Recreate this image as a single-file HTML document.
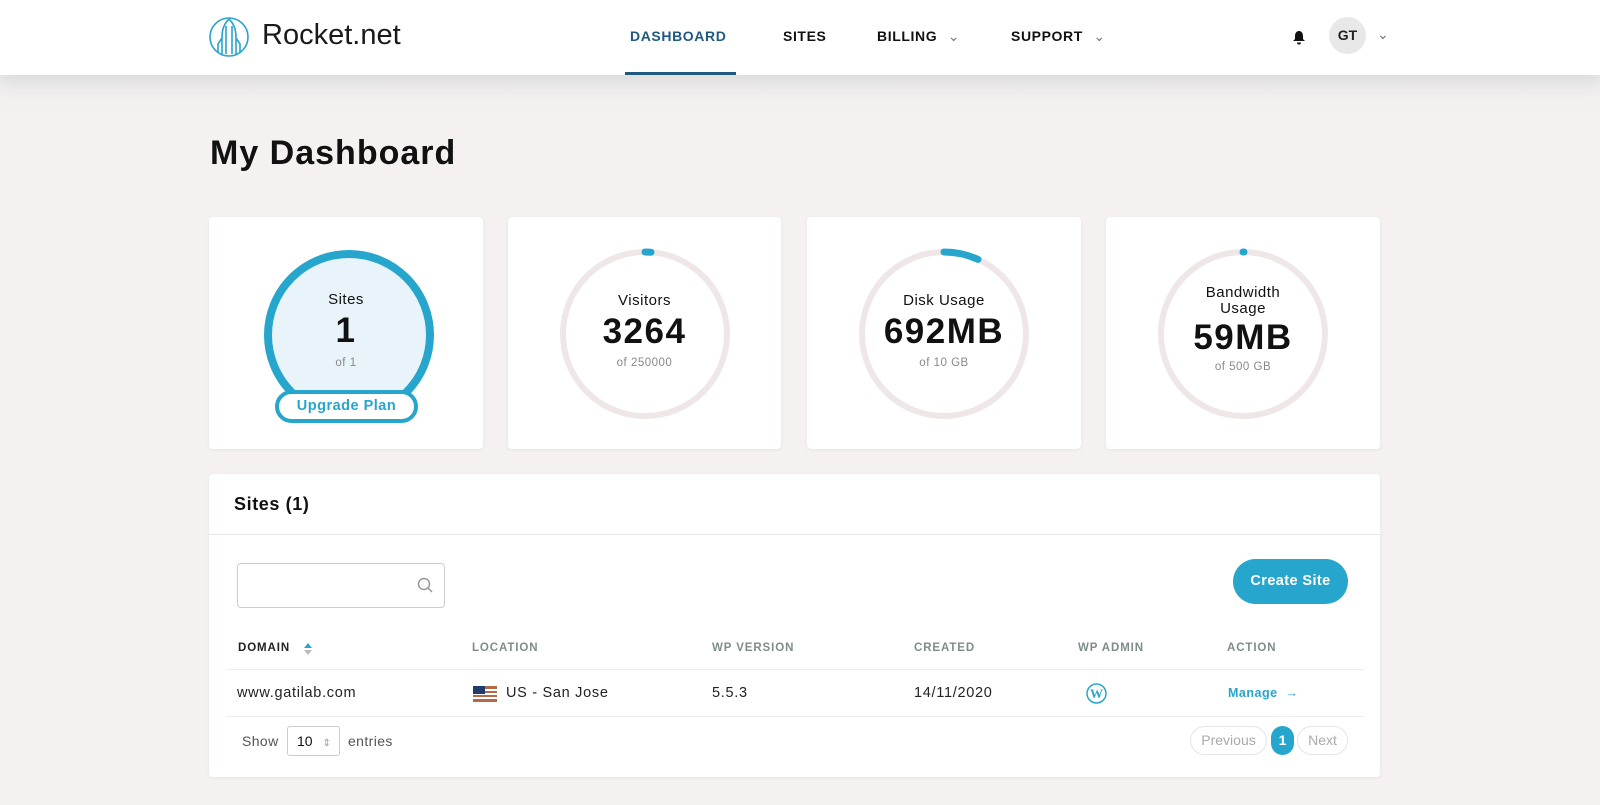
<!DOCTYPE html>
<html><head><meta charset="utf-8"><style>
*{box-sizing:border-box;margin:0;padding:0}
body{width:1600px;height:805px;overflow:hidden;background:#f6f1f1;font-family:"Liberation Sans",sans-serif;color:#111;position:relative}
.hdr{position:absolute;left:0;top:0;width:1600px;height:75px;background:#fff;box-shadow:0 6px 18px rgba(0,0,0,.08)}
.band{position:absolute;left:0;top:75px;width:1600px;height:40px;background:linear-gradient(#ececec,#f6f1f1)}
.nav{position:absolute;top:28px;font-weight:bold;font-size:14px;letter-spacing:.6px;color:#111}
.card{position:absolute;background:#fff;border-radius:4px;box-shadow:0 1px 4px rgba(0,0,0,.06)}
.lbl{position:absolute;width:100%;text-align:center;left:0;letter-spacing:.5px}
.big{font-size:35px;font-weight:bold;letter-spacing:1.5px}
.th{position:absolute;top:642px;font-size:11.5px;font-weight:bold;color:#7f8c8d;letter-spacing:.9px}
.td{position:absolute;top:685px;font-size:14.5px;color:#222;letter-spacing:.7px}
</style></head><body>
<div class="band"></div>
<div class="hdr">
<svg style="position:absolute;left:208px;top:16px" width="42" height="42" viewBox="0 0 42 42" fill="none" stroke="#2aa3cc" stroke-width="1.6"><circle cx="21" cy="21" r="19"/><path d="M21 3 C15 9 14 15 14 22 L10 28 L10 37 M21 3 C27 9 28 15 28 22 L32 28 L32 37 M18 10 V38 M24 10 V38 M14 22 V38 M28 22 V38"/></svg>
<div style="position:absolute;left:262px;top:19px;font-size:29px;color:#1a1a1a">Rocket<span style="font-weight:300">.net</span></div>
<div class="nav" style="left:630px;color:#1e5a7f">DASHBOARD</div>
<div style="position:absolute;left:625px;top:72px;width:111px;height:3px;background:#1e5a7f"></div>
<div class="nav" style="left:783px">SITES</div>
<div class="nav" style="left:877px">BILLING <span style="font-weight:normal;color:#777;margin-left:6px">&#8964;</span></div>
<div class="nav" style="left:1011px">SUPPORT <span style="font-weight:normal;color:#777;margin-left:6px">&#8964;</span></div>
<svg style="position:absolute;left:1292px;top:30px" width="14" height="15" viewBox="0 0 14 15"><path d="M7 1C4 1 3 4 3 6V9L1 11H13L11 9V6C11 4 10 1 7 1Z M5 12.5A2 2 0 0 0 9 12.5Z" fill="#111"/></svg>
<div style="position:absolute;left:1329px;top:17px;width:37px;height:37px;border-radius:50%;background:#e8e8e8;text-align:center;line-height:37px;font-weight:bold;font-size:14px;color:#222">GT</div>
<div style="position:absolute;left:1377px;top:26px;color:#777;font-size:14px">&#8964;</div>
</div>
<div style="position:absolute;left:210px;top:134px;font-size:34px;font-weight:bold;color:#111;letter-spacing:1px">My Dashboard</div>

<div class="card" style="left:209px;top:217px;width:274px;height:232px">
<svg style="position:absolute;left:52px;top:30px" width="176" height="176"><circle cx="88" cy="88" r="81" fill="#e8f4fa" stroke="#27a6cd" stroke-width="8"/></svg>
<div class="lbl" style="top:74px;font-size:15px">Sites</div>
<div class="lbl big" style="top:94px">1</div>
<div class="lbl" style="top:140px;font-size:11.5px;color:#888">of 1</div>
<div style="position:absolute;left:66px;top:173px;width:143px;height:33px;border:4px solid #27a6cd;border-radius:17px;background:#fff;text-align:center;line-height:25px;font-weight:bold;font-size:14.5px;color:#27a6cd;letter-spacing:.5px">Upgrade Plan</div>
</div>

<div class="card" style="left:508px;top:217px;width:273px;height:232px">
<svg style="position:absolute;left:49px;top:29px" width="176" height="176"><circle cx="88" cy="88" r="82" fill="none" stroke="#efe7e7" stroke-width="6"/><path d="M88 6 A82 82 0 0 1 94 6.2" fill="none" stroke="#27a6cd" stroke-width="7" stroke-linecap="round"/></svg>
<div class="lbl" style="top:75px;font-size:15px">Visitors</div>
<div class="lbl big" style="top:95px">3264</div>
<div class="lbl" style="top:140px;font-size:11.5px;color:#888">of 250000</div>
</div>

<div class="card" style="left:807px;top:217px;width:274px;height:232px">
<svg style="position:absolute;left:49px;top:29px" width="176" height="176"><circle cx="88" cy="88" r="82" fill="none" stroke="#efe7e7" stroke-width="6"/><path d="M88 6 A82 82 0 0 1 122 13.4" fill="none" stroke="#27a6cd" stroke-width="7" stroke-linecap="round"/></svg>
<div class="lbl" style="top:75px;font-size:15px">Disk Usage</div>
<div class="lbl big" style="top:95px">692MB</div>
<div class="lbl" style="top:140px;font-size:11.5px;color:#888">of 10 GB</div>
</div>

<div class="card" style="left:1106px;top:217px;width:274px;height:232px">
<svg style="position:absolute;left:49px;top:29px" width="176" height="176"><circle cx="88" cy="88" r="82" fill="none" stroke="#efe7e7" stroke-width="6"/><path d="M88 6 A82 82 0 0 1 89 6" fill="none" stroke="#27a6cd" stroke-width="7" stroke-linecap="round"/></svg>
<div class="lbl" style="top:68px;font-size:15px;line-height:16px">Bandwidth<br>Usage</div>
<div class="lbl big" style="top:101px">59MB</div>
<div class="lbl" style="top:144px;font-size:11.5px;color:#888">of 500 GB</div>
</div>

<div class="card" style="left:209px;top:474px;width:1171px;height:303px"></div>
<div style="position:absolute;left:234px;top:494px;font-size:18px;font-weight:bold;letter-spacing:.6px">Sites (1)</div>
<div style="position:absolute;left:209px;top:534px;width:1171px;height:1px;background:#e8e8e8"></div>
<div style="position:absolute;left:237px;top:563px;width:208px;height:45px;border:1px solid #ccc;border-radius:4px"></div>
<svg style="position:absolute;left:417px;top:577px" width="16" height="16" fill="none" stroke="#999" stroke-width="1.5"><circle cx="7" cy="7" r="5.5"/><path d="M11 11L15 15"/></svg>
<div style="position:absolute;left:1233px;top:559px;width:115px;height:45px;border-radius:23px;background:#27a6cd;color:#fff;text-align:center;padding-top:14px;font-size:14.5px;font-weight:bold;letter-spacing:.4px">Create Site</div>

<div class="th" style="left:238px;color:#222">DOMAIN</div>
<div style="position:absolute;left:304px;top:643px;width:0;height:0;border:4px solid transparent;border-bottom:5px solid #27a6cd;border-top:0"></div>
<div style="position:absolute;left:304px;top:650px;width:0;height:0;border:4px solid transparent;border-top:5px solid #bbb;border-bottom:0"></div>
<div class="th" style="left:472px">LOCATION</div>
<div class="th" style="left:712px">WP VERSION</div>
<div class="th" style="left:914px">CREATED</div>
<div class="th" style="left:1078px">WP ADMIN</div>
<div class="th" style="left:1227px">ACTION</div>
<div style="position:absolute;left:226px;top:669px;width:1138px;height:1px;background:#eee"></div>
<div class="td" style="left:237px">www.gatilab.com</div>
<svg style="position:absolute;left:473px;top:686px" width="24" height="16"><rect width="24" height="16" fill="#b46a45"/><rect y="3" width="24" height="2" fill="#fff"/><rect y="7" width="24" height="2" fill="#fff"/><rect y="11" width="24" height="2" fill="#fff"/><rect width="12" height="8" fill="#1f3c6b"/></svg>
<div class="td" style="left:506px">US - San Jose</div>
<div class="td" style="left:712px">5.5.3</div>
<div class="td" style="left:914px">14/11/2020</div>
<svg style="position:absolute;left:1086px;top:683px" width="21" height="21" viewBox="0 0 21 21"><circle cx="10.5" cy="10.5" r="9.5" fill="none" stroke="#27a6cd" stroke-width="1.5"/><text x="10.5" y="15" text-anchor="middle" font-family="Liberation Serif" font-weight="bold" font-size="13" fill="#27a6cd">W</text></svg>
<div style="position:absolute;left:1228px;top:686px;font-size:12.5px;font-weight:bold;color:#27a6cd;letter-spacing:.5px">Manage &nbsp;&#8594;</div>
<div style="position:absolute;left:226px;top:716px;width:1138px;height:1px;background:#eee"></div>
<div style="position:absolute;left:242px;top:733px;font-size:14px;color:#555;letter-spacing:.4px">Show</div>
<div style="position:absolute;left:287px;top:726px;width:53px;height:30px;border:1px solid #ccc;border-radius:3px;font-size:14px;line-height:28px;padding-left:9px">10 <span style="color:#999;font-size:10px;margin-left:6px">&#8661;</span></div>
<div style="position:absolute;left:348px;top:733px;font-size:14px;color:#555;letter-spacing:.4px">entries</div>
<div style="position:absolute;left:1190px;top:726px;width:77px;height:29px;border:1px solid #e5e5e5;border-radius:15px;text-align:center;line-height:27px;font-size:14px;color:#aaa">Previous</div>
<div style="position:absolute;left:1271px;top:726px;width:23px;height:29px;border-radius:12px;background:#27a6cd;color:#fff;text-align:center;line-height:29px;font-size:14px;font-weight:bold">1</div>
<div style="position:absolute;left:1297px;top:726px;width:51px;height:29px;border:1px solid #e5e5e5;border-radius:15px;text-align:center;line-height:27px;font-size:14px;color:#aaa">Next</div>
</body></html>
